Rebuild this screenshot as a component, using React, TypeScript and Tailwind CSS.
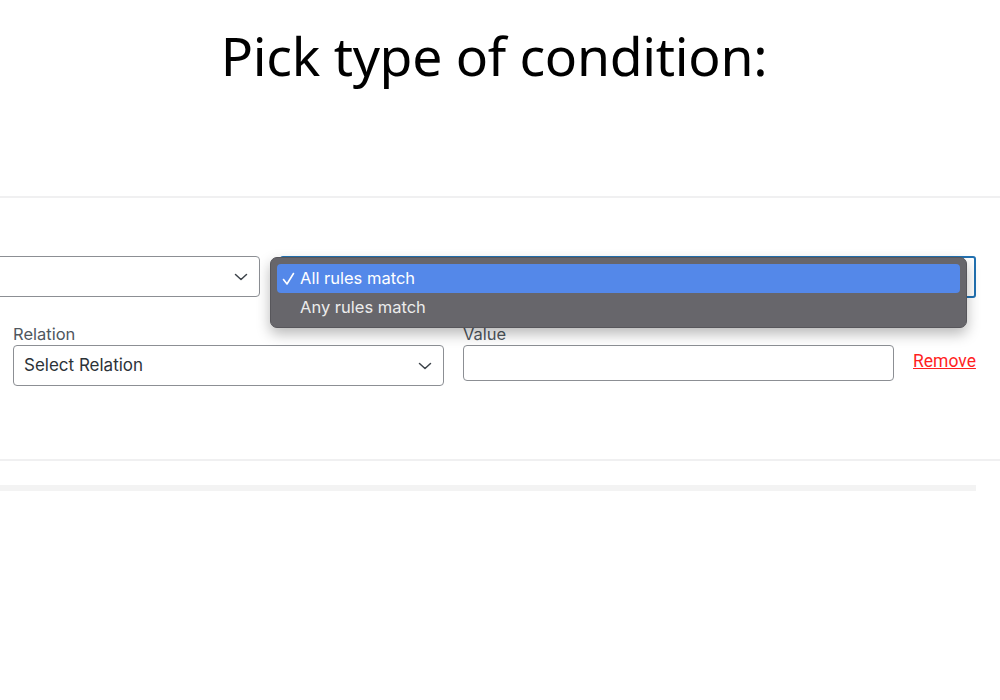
import React from "react";

function Chevron() {
  return (
    <svg width="16" height="16" viewBox="0 0 16 16" fill="none" className="shrink-0">
      <path d="M2.5 5.5 L8 10.5 L13.5 5.5" stroke="#3c434a" strokeWidth="1.5" strokeLinecap="round" strokeLinejoin="round" />
    </svg>
  );
}

function Check() {
  return (
    <svg width="13" height="14" viewBox="0 0 13 14" fill="none">
      <path d="M1.5 7.5 L5 12 L11.5 1.5" stroke="white" strokeWidth="1.6" strokeLinecap="round" strokeLinejoin="round" />
    </svg>
  );
}

export default function App() {
  return (
    <div className="w-[1000px] h-[700px] bg-white overflow-hidden flex flex-col" style={{ fontFamily: "Inter, 'Noto Sans', sans-serif" }}>
      <div className="pt-[22px] h-[196px] flex justify-center pr-[12px]">
        <h1 className="text-[53.5px] leading-[68px] text-black font-normal tracking-[-0.3px]" style={{ fontFamily: "'Noto Sans', sans-serif" }}>
          Pick type of condition:
        </h1>
      </div>
      <div className="h-[2px] bg-[#f0f0f1]" />
      <div className="flex flex-col pr-[24px]">
        <div className="flex gap-[20px] mt-[58px] ml-[-40px]">
          <div className="w-[300px] h-[41px] border border-[#8c8f94] rounded-[4px] bg-white flex items-center justify-end pr-[10px]">
            <Chevron />
          </div>
          <div className="relative flex-1 h-[42px] border-2 border-[#2271b1] rounded-[3px] bg-white">
            <div className="absolute left-[-12px] top-[-1px] w-[697px] h-[71px] rounded-[7px] bg-[#67666b] border border-[#57565b] shadow-[0_6px_14px_rgba(0,0,0,0.28)] px-[6px] pt-[6px] text-[16.5px]">
              <div className="h-[29px] rounded-[4px] bg-[#5488e9] flex items-center text-white">
                <span className="w-[23px] pl-[5px] flex items-center">
                  <Check />
                </span>
                <span>All rules match</span>
              </div>
              <div className="h-[29px] flex items-center text-[#ececec] pl-[23px]">Any rules match</div>
            </div>
          </div>
        </div>
        <div className="flex items-start ml-[13px] mt-[26px]">
          <div className="w-[431px] flex flex-col">
            <span className="text-[16.5px] leading-[21px] text-[#50575e]">Relation</span>
            <div className="h-[41px] border border-[#8c8f94] rounded-[4px] bg-white flex items-center justify-between pl-[10px] pr-[10px]">
              <span className="text-[17px] text-[#2c3338]">Select Relation</span>
              <Chevron />
            </div>
          </div>
          <div className="w-[431px] ml-[19px] flex flex-col">
            <span className="text-[16.5px] leading-[21px] text-[#50575e]">Value</span>
            <div className="h-[36px] border border-[#8c8f94] rounded-[4px] bg-white" />
          </div>
          <a className="ml-[19px] mt-[26px] text-[17.5px] leading-[22px] text-[#ff1f1f] underline" style={{ fontFamily: "Roboto, sans-serif" }}>
            Remove
          </a>
        </div>
      </div>
      <div className="h-[2px] bg-[#f0f0f1] mt-[73px]" />
      <div className="h-[6px] w-[976px] bg-[#f3f3f3] mt-[24px]" />
    </div>
  );
}
